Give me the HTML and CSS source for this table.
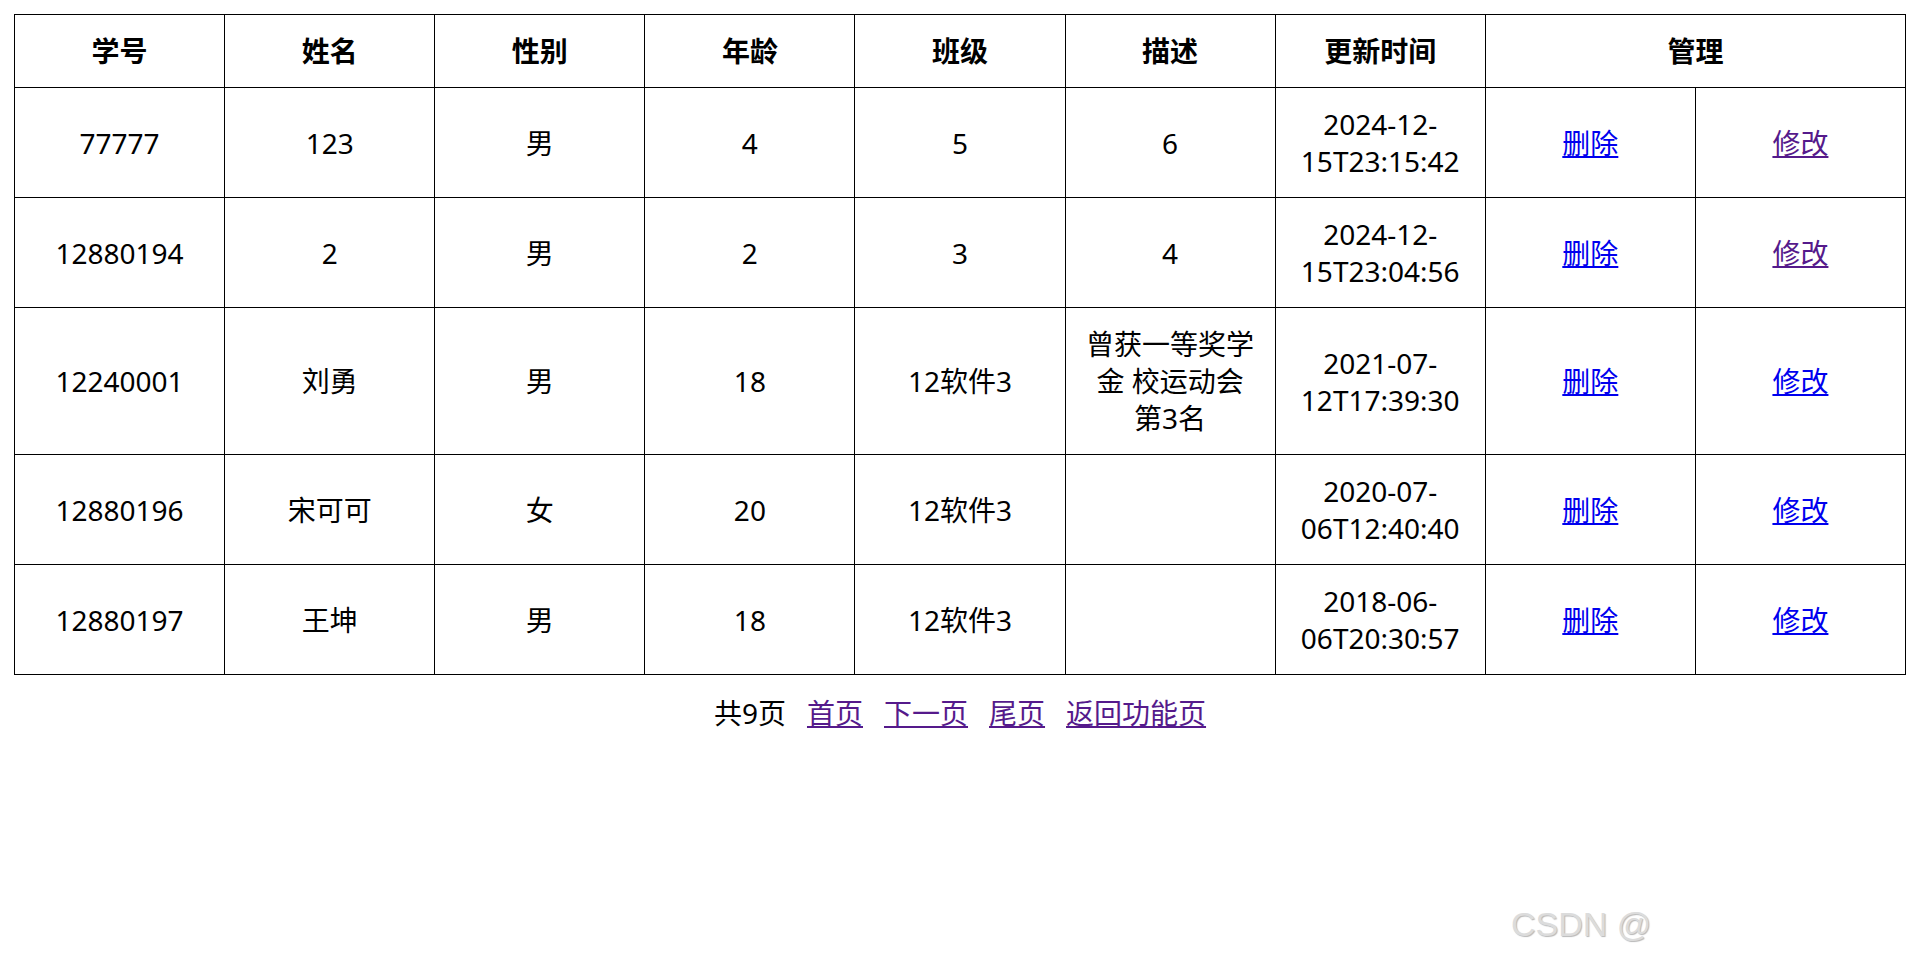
FILE: index.html
```html
<!DOCTYPE html>
<html lang="zh-CN">
<head>
<meta charset="utf-8">
<title>学生列表</title>
<link rel="stylesheet" href="styles.css">
</head>
<body>
<table class="grid">
  <thead>
    <tr>
      <th>学号</th><th>姓名</th><th>性别</th><th>年龄</th><th>班级</th><th>描述</th><th>更新时间</th><th colspan="2">管理</th>
    </tr>
  </thead>
  <tbody>
    <tr>
      <td>77777</td><td>123</td><td>男</td><td>4</td><td>5</td><td>6</td><td>2024-12-15T23:15:42</td>
      <td><a class="link" href="#">删除</a></td><td><a class="link visited" href="#">修改</a></td>
    </tr>
    <tr>
      <td>12880194</td><td>2</td><td>男</td><td>2</td><td>3</td><td>4</td><td>2024-12-15T23:04:56</td>
      <td><a class="link" href="#">删除</a></td><td><a class="link visited" href="#">修改</a></td>
    </tr>
    <tr>
      <td>12240001</td><td>刘勇</td><td>男</td><td>18</td><td>12软件3</td><td>曾获一等奖学金 校运动会第3名</td><td>2021-07-12T17:39:30</td>
      <td><a class="link" href="#">删除</a></td><td><a class="link" href="#">修改</a></td>
    </tr>
    <tr>
      <td>12880196</td><td>宋可可</td><td>女</td><td>20</td><td>12软件3</td><td></td><td>2020-07-06T12:40:40</td>
      <td><a class="link" href="#">删除</a></td><td><a class="link" href="#">修改</a></td>
    </tr>
    <tr>
      <td>12880197</td><td>王坤</td><td>男</td><td>18</td><td>12软件3</td><td></td><td>2018-06-06T20:30:57</td>
      <td><a class="link" href="#">删除</a></td><td><a class="link" href="#">修改</a></td>
    </tr>
  </tbody>
</table>
<div class="pager">
  <span>共9页</span>
  <a class="link visited" href="#">首页</a>
  <a class="link visited" href="#">下一页</a>
  <a class="link visited" href="#">尾页</a>
  <a class="link visited" href="#">返回功能页</a>
</div>
<div class="watermark">CSDN @</div>
</body>
</html>
```
FILE: styles.css
```css
html, body {
  margin: 0;
  padding: 0;
  background: #fff;
}
body {
  font-family: "Noto Sans", "Noto Sans CJK SC", sans-serif;
  font-size: 28px;
  line-height: 37px;
  color: #000;
  min-height: 957px;
  position: relative;
}
.grid {
  border-collapse: collapse;
  table-layout: fixed;
  width: calc(100% - 28px);
  margin: 14px 14px 0;
}
.grid th,
.grid td {
  border: 1px solid #000;
  padding: 18px 19px 17px;
  text-align: center;
  vertical-align: middle;
  line-height: 37px;
}
.grid th {
  font-weight: 700;
}
.link {
  color: #0000ee;
  text-decoration: underline;
}
.link.visited {
  color: #551a8b;
}
.pager {
  display: flex;
  justify-content: center;
  gap: 21px;
  margin-top: 20px;
}
.watermark {
  position: absolute;
  left: 1511px;
  top: 904px;
  font-family: "Liberation Sans", Arial, sans-serif;
  font-size: 34px;
  line-height: 40px;
  color: #dcdcdc;
  text-shadow: 1px 1px 1px #b8b8b8;
}
```
